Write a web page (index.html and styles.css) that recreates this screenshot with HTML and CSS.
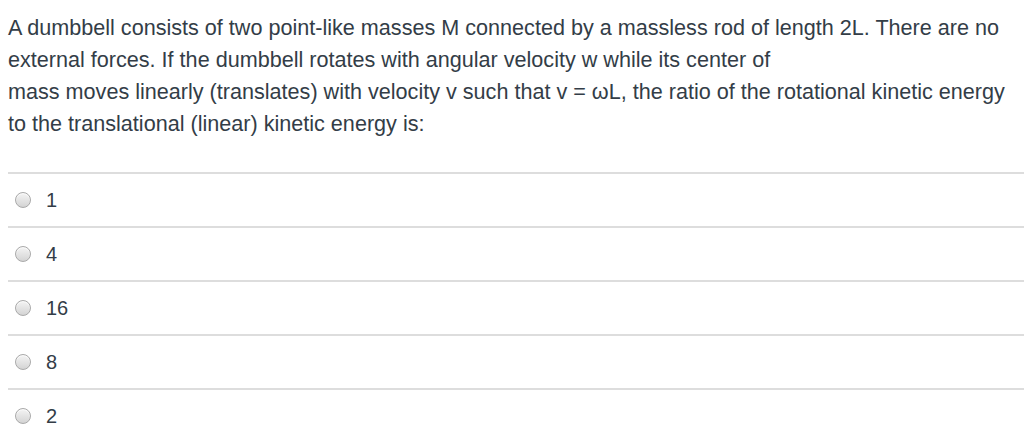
FILE: index.html
```
<!DOCTYPE html>
<html>
<head>
<meta charset="utf-8">
<link rel="stylesheet" href="styles.css">
</head>
<body>
<div class="question">
  <p class="prompt">A dumbbell consists of two point-like masses M connected by a massless rod of length 2L. There are no external forces. If the dumbbell rotates with angular velocity w while its center of<br>mass moves linearly (translates) with velocity v such that v = ωL, the ratio of the rotational kinetic energy to the translational (linear) kinetic energy is:</p>
  <ul class="options">
    <li class="option"><span class="radio"></span><span class="label">1</span></li>
    <li class="option"><span class="radio"></span><span class="label">4</span></li>
    <li class="option"><span class="radio"></span><span class="label">16</span></li>
    <li class="option"><span class="radio"></span><span class="label">8</span></li>
    <li class="option"><span class="radio"></span><span class="label">2</span></li>
  </ul>
</div>
</body>
</html>
```
FILE: styles.css
```
html, body {
  margin: 0;
  padding: 0;
  background: #ffffff;
}
body {
  padding: 8px 0 0 8px;
  font-family: "Liberation Sans", Arial, Helvetica, sans-serif;
  color: #333d47;
}
.question {
  width: 1016px;
}
.prompt {
  margin: 0;
  padding-top: 4px;
  font-size: 21.6px;
  line-height: 32px;
}
.options {
  list-style: none;
  margin: 32px 0 0 0;
  padding: 0;
}
.option {
  display: flex;
  align-items: center;
  height: 52px;
  border-top: 2px solid #dddddd;
  padding-left: 7px;
  gap: 15px;
  font-size: 20px;
}
.radio {
  width: 16px;
  height: 16px;
  box-sizing: border-box;
  border-radius: 50%;
  border: 1px solid #a9a9a9;
  background: linear-gradient(#f4f4f4, #d4d4d4);
  box-shadow: inset 0 1px 1px rgba(255,255,255,0.8);
}
.label {
  line-height: 1;
}
```
